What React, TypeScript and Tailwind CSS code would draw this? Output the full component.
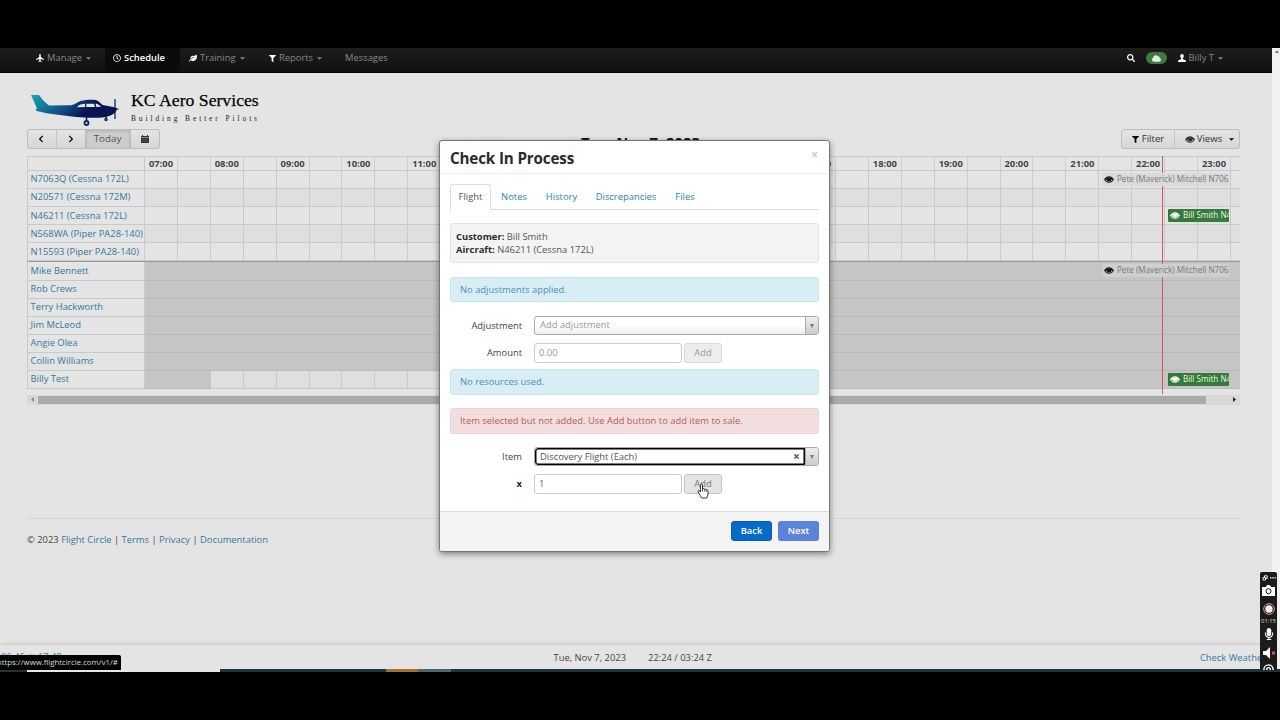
import type { ReactNode } from "react";
import {
  FaChevronLeft,
  FaChevronRight,
  FaCloud,
  FaFilter,
  FaLeaf,
  FaMicrophone,
  FaRegClock,
  FaSearch,
} from "react-icons/fa";

const aircraft = [
  "N7063Q (Cessna 172L)",
  "N20571 (Cessna 172M)",
  "N46211 (Cessna 172L)",
  "N568WA (Piper PA28-140)",
  "N15593 (Piper PA28-140)",
];
const people = [
  "Mike Bennett",
  "Rob Crews",
  "Terry Hackworth",
  "Jim McLeod",
  "Angie Olea",
  "Collin Williams",
  "Billy Test",
];
const slots = Array.from({ length: 33 }, (_, i) => i);

function Caret({ className = "" }: { className?: string }) {
  return (
    <svg viewBox="0 0 6 3" className={`h-[3px] w-[5px] shrink-0 ${className}`} fill="currentColor">
      <path d="M0 0h6L3 3z" />
    </svg>
  );
}

function Eye({ className = "" }: { className?: string }) {
  return (
    <svg viewBox="0 0 18 12" className={`h-[7px] w-[10px] shrink-0 ${className}`} fill="currentColor">
      <path
        fillRule="evenodd"
        d="M9 0C5 0 2 2.500 0 6c2 3.500 5 6 9 6s7-2.500 9-6c-2-3.500-5-6-9-6zM2.500 7c.5-1 .9-1.400 1.500-2 0 3 2.300 4.600 5 4.600s5-1.600 5-4.600c.6.600 1 1 1.500 2-1.500 2.300-3.900 3.600-6.500 3.600S4 9.300 2.500 7zM7 3.200c.6-.8 1.300-1.200 2.200-1.200l.1 1c-.7 0-1.100.3-1.500.8z"
      />
    </svg>
  );
}

function PlaneIcon() {
  return (
    <svg viewBox="0 0 16 16" className="mr-[3px] ml-px size-[8px] shrink-0 text-white" fill="currentColor">
      <path d="M8 0C7 0 6.400 1.300 6.400 2.800v3.400L0 10.300V12l6.400-1.800.3 3L4.500 15v1L8 15.200l3.500.8v-1l-2.200-1.800.3-3L16 12v-1.700L9.600 6.200V2.800C9.600 1.300 9 0 8 0z" />
    </svg>
  );
}

function UserIcon() {
  return (
    <svg viewBox="0 0 16 16" className="size-[8px] shrink-0 text-white" fill="currentColor">
      <path d="M8 0C5.800 0 4.500 1.600 4.500 4c0 1.800.7 3.600 1.800 4.600v1.600C5.500 11.600.5 12 0 14v2h16v-2c-.5-2-5.500-2.400-6.300-3.800V8.600C10.800 7.600 11.500 5.800 11.500 4 11.500 1.600 10.200 0 8 0z" />
    </svg>
  );
}

function CalendarIcon() {
  return (
    <svg viewBox="0 0 16 16" className="size-[8px]" fill="currentColor">
      <path d="M2 0h2v2h8V0h2v2h2v3H0V2h2zM0 6h16v10H0z" />
      <path d="M1 9h14M1 12.500h14" stroke="#777" strokeWidth=".8" />
    </svg>
  );
}

function PlaneLogo() {
  return (
    <svg viewBox="0 0 88 32" className="h-[32px] w-[88px] shrink-0">
      <defs>
        <linearGradient id="plane" x1="0" y1="0" x2="1" y2="0.300">
          <stop offset="0" stopColor="#12a9ae" />
          <stop offset=".5" stopColor="#124f86" />
          <stop offset=".8" stopColor="#071552" />
          <stop offset="1" stopColor="#071552" />
        </linearGradient>
      </defs>
      <path
        fill="url(#plane)"
        fillRule="evenodd"
        d="M0 0h8c3 4 6 8 10 10.500l22-.3c4-.4 6-3.200 10-4.400 4-.9 9-1.300 13-1 4 .2 6 3 8.500 5.200l9.500 1.700c3 .6 5 1.300 5 2.100-.5 2.500-2 4.500-5 6-3 1.500-6 2.300-10 2.700-7 .4-18 .2-26-.5L17 18.500 5.500 16 4.500 14.500l1.500-1zM46 12.200l8-.2V8.800c-3 .2-6 .8-8 3.400zm9.300-.2 8.700-.1-1-3.200c-3-.1-5 0-7.700.1zm10 -.1 5-.2-4-2.900H64.600z"
      />
      <path d="M84 4v20M82 14h5.500" stroke="#071552" strokeWidth="1.200" />
      <path d="M55.500 21v5M75 20v3.500" stroke="#071552" strokeWidth="1.500" />
      <circle cx="55.500" cy="28" r="2" fill="none" stroke="#0b235f" strokeWidth="1.800" />
      <circle cx="75" cy="24.500" r="1.100" fill="none" stroke="#0b235f" strokeWidth="1.400" />
    </svg>
  );
}

function NavBar() {
  const item = "flex items-center whitespace-nowrap";
  return (
    <nav className="flex h-[25px] shrink-0 items-stretch border-b border-black bg-linear-to-b from-[#1d1d1d] to-[#101010] pb-[4px] text-[#868686]">
      <div className={`${item} ml-[26px] w-[79px] pl-[9px]`}>
        <PlaneIcon />
        Manage
        <Caret className="ml-[4px]" />
      </div>
      <div className="-mb-[4px] flex w-[75px] items-center bg-[#0b0b0b] pb-[4px] pl-[8px] text-white">
        <FaRegClock className="mr-[3px] size-[8px]" />
        <span className="font-semibold">Schedule</span>
      </div>
      <div className={`${item} w-[80px] pl-[9px]`}>
        <FaLeaf className="mr-[3px] size-[8px] text-white" />
        Training
        <Caret className="ml-[4px]" />
      </div>
      <div className={`${item} w-[77px] pl-[9px]`}>
        <FaFilter className="mr-[3px] size-[7px] text-white" />
        Reports
        <Caret className="ml-[4px]" />
      </div>
      <div className={`${item} pl-[8px]`}>Messages</div>
      <div className="ml-auto flex items-center pr-[49px]">
        <FaSearch className="size-[8px] text-white" />
        <span className="ml-[11px] flex h-[12px] w-[21px] items-center justify-center rounded-full bg-[#3e7a3f] text-[#e5efe5]">
          <FaCloud className="size-[9px]" />
        </span>
        <span className="ml-[11px] flex items-center gap-[3px]">
          <UserIcon />
          Billy T
          <Caret className="ml-px" />
        </span>
      </div>
    </nav>
  );
}

function Toolbar() {
  const group =
    "flex h-[20px] items-stretch rounded-[3px] border border-[#bdbdbd] bg-linear-to-b from-[#e4e4e4] to-[#d6d6d6] text-[#333]";
  return (
    <div className="flex h-[20px] items-center justify-between">
      <div className={group}>
        <span className="flex w-[29px] items-center justify-center border-r border-[#c4c4c4] pr-[2px]">
          <FaChevronLeft className="size-[8px] text-black" />
        </span>
        <span className="flex w-[29px] items-center justify-center border-r border-[#bbb]">
          <FaChevronRight className="size-[8px] text-black" />
        </span>
        <span className="flex w-[45px] items-center justify-center border-r border-[#bbb] bg-[#cdcdcd] pr-px text-[9.800px] text-[#555] shadow-[inset_0_1px_3px_rgba(0,0,0,0.15)]">
          Today
        </span>
        <span className="flex w-[28px] items-center justify-center pr-px">
          <CalendarIcon />
        </span>
      </div>
      <h2 className="mt-[6px] text-[14.800px] font-bold text-[#111]">Tue, Nov 7, 2023</h2>
      <div className={`${group} text-[9.600px]`}>
        <span className="flex w-[53px] items-center justify-center gap-[3px] border-r border-[#c4c4c4]">
          <FaFilter className="size-[7px] text-black" />
          Filter
        </span>
        <span className="flex w-[64px] items-center justify-center gap-[2px] pl-[5px]">
          <Eye />
          Views
          <Caret className="ml-[5px] text-black" />
        </span>
      </div>
    </div>
  );
}

function Row({ label, shade }: { label: string; shade: (slot: number) => string }) {
  return (
    <div className="flex h-[18.100px] border-b border-[#c9c9c9]">
      <div className="flex w-[118px] shrink-0 items-center border-x border-[#c9c9c9] pb-px pl-[2.500px] whitespace-nowrap text-[#37779f]">
        {label}
      </div>
      {slots.map((s) => (
        <div key={s} className={`w-[32.910px] shrink-0 border-r ${shade(s)}`} />
      ))}
      <div className={`grow ${shade(33)}`} />
    </div>
  );
}

function EventTag({ className, children }: { className: string; children: ReactNode }) {
  return (
    <div
      className={`absolute flex h-[13px] items-center overflow-hidden rounded-[1px] pl-px text-[8.100px] whitespace-nowrap ${className}`}
    >
      {children}
    </div>
  );
}

function Schedule() {
  const pete = (
    <>
      <Eye className="mr-[3px] ml-px text-[#151515]" />
      Pete (Maverick) Mitchell N7063Q
    </>
  );
  const bill = (
    <>
      <Eye className="mr-[3px] ml-px text-white" />
      Bill Smith N46211
    </>
  );
  return (
    <div className="relative mt-[7px] h-[238.500px]">
      <div className="overflow-hidden border-t border-[#c9c9c9]">
        <div className="flex h-[14px] border-b border-[#c9c9c9] font-bold text-[#444]">
          <div className="w-[118px] shrink-0 border-x border-[#c9c9c9]" />
          {slots.map((s) => (
            <div
              key={s}
              className="flex w-[32.910px] shrink-0 items-center justify-center border-r border-[#cfcfcf]"
            >
              {s % 2 === 0 ? `${String(7 + s / 2).padStart(2, "0")}:00` : ""}
            </div>
          ))}
        </div>
        {aircraft.map((a, i) => (
          <Row
            key={a}
            label={a}
            shade={() => (i % 2 ? "border-[#c9c9c9] bg-[#dfdfdf]" : "border-[#c9c9c9]")}
          />
        ))}
        <div className="h-px bg-[#999]" />
        {people.map((p, i) => (
          <Row
            key={p}
            label={p}
            shade={(s) =>
              i === 6 && s > 1 && s < 20
                ? "border-[#c9c9c9] bg-[#dfdfdf]"
                : "border-[#c5c5c5] bg-[#c5c5c5] shadow-[0_1px_0_#b9b9b9]"
            }
          />
        ))}
      </div>
      <div className="absolute top-0 left-[1135px] h-[238px] w-px bg-[#cf5a57]" />
      <EventTag className="top-[17px] left-[1075px] w-[127px] bg-[#dadada] text-[#777]">{pete}</EventTag>
      <EventTag className="top-[53px] left-[1141px] w-[61px] bg-[#357a38] text-[#eef5ee]">{bill}</EventTag>
      <EventTag className="top-[108px] left-[1075px] w-[127px] bg-[#cfcfcf] text-[#777]">{pete}</EventTag>
      <EventTag className="top-[217px] left-[1141px] w-[61px] bg-[#357a38] text-[#eef5ee]">{bill}</EventTag>
    </div>
  );
}

function Page() {
  return (
    <main className="flex grow flex-col bg-[#e4e4e4] pr-[32px] pl-[27px]">
      <header className="flex h-[56px] shrink-0 pt-[22px] pl-[4px]">
        <PlaneLogo />
        <div className="ml-[12px] flex flex-col font-['Liberation_Serif',serif] whitespace-nowrap text-black">
          <div className="-mt-[5px] text-[17.700px] leading-[20px] [-webkit-text-stroke:0.250px_#111]">
            KC Aero Services
          </div>
          <div className="mt-[4px] text-[7.400px] leading-[10px] tracking-[2.930px] text-[#222]">
            Building Better Pilots
          </div>
        </div>
      </header>
      <Toolbar />
      <Schedule />
      <div className="flex h-[10px] shrink-0 items-center justify-between bg-[#d9d9d9] px-[4px]">
        <svg viewBox="0 0 3 5" className="h-[5px] w-[3px]" fill="#888">
          <path d="M3 0v5L0 2.500z" />
        </svg>
        <div className="mr-auto ml-[4px] h-[8px] w-[1168px] bg-[#aaa]" />
        <svg viewBox="0 0 3 5" className="h-[5px] w-[3px]" fill="#222">
          <path d="M0 0v5l3-2.500z" />
        </svg>
      </div>
      <footer className="mt-[113.500px] border-t border-[#d5d5d5] pt-[14px] leading-[14px] text-[#444] [&_a]:text-[#37779f]">
        © 2023 <a>Flight Circle</a> | <a>Terms</a> | <a>Privacy</a> | <a>Documentation</a>
      </footer>
    </main>
  );
}

function StatusBar() {
  return (
    <div className="flex h-[25px] shrink-0 items-center border-t border-[#cfcfcf] bg-[#e4e4e4] text-[#444] shadow-[0_-1px_3px_rgba(0,0,0,0.08)]">
      <span className="w-[553.500px] shrink-0 pl-px text-[#2f7ba6]">
        06:46 <span className="text-[#555]">☀</span> 17:48
      </span>
      <span className="pt-px">Tue, Nov 7, 2023</span>
      <span className="ml-[22px] pt-px">22:24 / 03:24 Z</span>
      <span className="mr-[6px] ml-auto pt-px text-[#2f7ba6]">Check Weather</span>
    </div>
  );
}

function Alert({ tone, className, children }: { tone: "info" | "error"; className: string; children: ReactNode }) {
  const colors =
    tone === "info"
      ? "border-[#c3e9ef] bg-[#d9edf5] text-[#5090b3]"
      : "border-[#eed3d7] bg-[#f2dede] text-[#b85c5a]";
  return (
    <div className={`flex items-center rounded-[3px] border pl-[9px] ${colors} ${className}`}>
      {children}
    </div>
  );
}

function SelectBox({ active, children }: { active?: boolean; children: ReactNode }) {
  return (
    <div className="flex h-[19px] w-[285px] overflow-hidden rounded-[3px] border border-[#aaa] bg-linear-to-b from-white from-50% to-[#eee]">
      <div
        className={`flex grow items-center justify-between ${
          active
            ? "rounded-l-[3px] border-[1.500px] border-black bg-white pr-[5px] pl-[4px] text-[#555] shadow-[inset_0_0_0_0.500px_#000]"
            : "pb-px pl-[5px] text-[#999]"
        }`}
      >
        {children}
      </div>
      <div className="flex w-[13px] items-center justify-center border-l border-[#aaa] bg-linear-to-b from-[#eee] to-[#ccc] text-[#777]">
        <svg viewBox="0 0 4 4" className="size-[4px]" fill="currentColor">
          <path d="M0 0h4L2 4z" />
        </svg>
      </div>
    </div>
  );
}

function Field({ label, className, children }: { label: ReactNode; className: string; children: ReactNode }) {
  return (
    <div className={`flex items-center ${className}`}>
      <label className="w-[72px] shrink-0 text-right text-[#444]">{label}</label>
      <div className="ml-[12px] flex gap-[2px]">{children}</div>
    </div>
  );
}

function TextBox({ children, muted }: { children: ReactNode; muted?: boolean }) {
  return (
    <div
      className={`flex h-[20px] w-[148px] items-center rounded-[3px] border border-[#ccc] bg-white pl-[4px] ${
        muted ? "text-[#999]" : "text-[#666]"
      }`}
    >
      {children}
    </div>
  );
}

function HandCursor() {
  return (
    <svg viewBox="0 0 24 32" className="absolute top-[8px] left-[12px] h-[16px] w-[12px]">
      <path
        d="M7 18V4c0-2.800 4-2.800 4 0v8c1-1.500 3.500-1 3.700.8 1-1.300 3.300-.7 3.500 1 1.500-.9 3.800 0 3.800 2.200v6c0 3-2 5-2.500 8H9c-.8-3.500-3.500-5.500-5-9l-2-4c-.8-2.200 1.800-3.300 3-1.500z"
        fill="#fff"
        stroke="#222"
        strokeWidth="1.800"
        strokeLinejoin="round"
      />
      <path d="M11 12v5M14.700 13v4M18.300 14v4" stroke="#222" strokeWidth="1.500" />
    </svg>
  );
}

function Modal() {
  return (
    <section className="absolute top-[140px] left-[439px] flex h-[412px] w-[391px] flex-col overflow-hidden rounded-[3px] border border-[#777] bg-white shadow-[0_2px_6px_rgba(0,0,0,0.45)]">
      <div className="flex h-[33px] shrink-0 justify-between border-b border-[#eee] pr-[10px] pl-[10px]">
        <h3 className="pt-px text-[15.200px] leading-[33px] font-bold tracking-[-0.150px] text-[#2b2b2b]">
          Check In Process
        </h3>
        <span className="pr-px text-[12px] leading-[28px] font-bold text-[#ccc]">×</span>
      </div>
      <div className="flex grow flex-col px-[10px] pt-[10px]">
        <div className="flex h-[26px] shrink-0 items-end border-b border-[#ddd] text-[#1d86ba]">
          <span className="-mb-px flex h-[26px] w-[41px] items-center justify-center rounded-t-[3px] border border-b-0 border-[#ddd] bg-white pb-px text-[#555]">
            Flight
          </span>
          <span className="flex h-[25px] w-[46px] items-center justify-center">Notes</span>
          <span className="flex h-[25px] w-[49px] items-center justify-center">History</span>
          <span className="flex h-[25px] w-[80px] items-center justify-center">Discrepancies</span>
          <span className="flex h-[25px] w-[38px] items-center justify-center">Files</span>
        </div>
        <div className="mt-[13px] flex h-[40px] shrink-0 flex-col justify-center rounded-[3px] border border-[#e3e3e3] bg-[#f3f3f3] pl-[5px] leading-[13.400px] text-[#555]">
          <div>
            <b className="text-[#2b2b2b]">Customer:</b> Bill Smith
          </div>
          <div>
            <b className="text-[#2b2b2b]">Aircraft:</b> N46211 (Cessna 172L)
          </div>
        </div>
        <Alert tone="info" className="mt-[14px] h-[25px] shrink-0">
          No adjustments applied.
        </Alert>
        <Field label="Adjustment" className="mt-[14px] h-[19px]">
          <SelectBox>Add adjustment</SelectBox>
        </Field>
        <Field label="Amount" className="mt-[8px] h-[20px]">
          <TextBox muted>0.00</TextBox>
          <span className="flex w-[38px] items-center justify-center rounded-[3px] border border-[#d9d9d9] bg-[#ededed] text-[#999]">
            Add
          </span>
        </Field>
        <Alert tone="info" className="mt-[6px] h-[26px] shrink-0">
          No resources used.
        </Alert>
        <Alert tone="error" className="mt-[13px] h-[26px] shrink-0">
          Item selected but not added. Use Add button to add item to sale.
        </Alert>
        <Field label="Item" className="mt-[13px] h-[19px]">
          <SelectBox active>
            Discovery Flight (Each)
            <svg viewBox="0 0 6 6" className="size-[5px]">
              <path d="M.5.5l5 5M5.500.5l-5 5" stroke="#555" strokeWidth="1.600" />
            </svg>
          </SelectBox>
        </Field>
        <Field label={<b className="text-[#222]">x</b>} className="mt-[8px] h-[20px]">
          <TextBox>1</TextBox>
          <span className="relative flex w-[38px] items-center justify-center rounded-[3px] border border-[#c4c4c4] bg-[#e4e4e4] text-[#777]">
            Add
            <HandCursor />
          </span>
        </Field>
      </div>
      <div className="flex h-[40px] shrink-0 items-center justify-end gap-[6px] border-t border-[#ddd] bg-[#f4f4f4] pr-[10px] pb-px font-semibold text-white">
        <span className="flex h-[20px] w-[41px] items-center justify-center rounded-[3px] border border-[#0a5cab] bg-[#056bc9]">
          Back
        </span>
        <span className="flex h-[20px] w-[41px] items-center justify-center rounded-[3px] bg-[#5a83d9]">Next</span>
      </div>
    </section>
  );
}

function RecorderRail() {
  return (
    <aside className="absolute top-[572px] left-[1260px] flex h-[98px] w-[17px] flex-col items-center overflow-hidden rounded-t-[2px] bg-[#1b1b1b] text-white">
      <div className="mt-[3px] flex h-[6px] w-full items-center justify-center gap-[2px]">
        <svg viewBox="0 0 6 6" className="size-[6px]" fill="none" stroke="#eee">
          <path d="M1 2.500h2.500V5H1zM2.500 2V.8h2.700v2.700H4" />
        </svg>
        <svg viewBox="0 0 6 2" className="h-[2px] w-[6px]" fill="#ddd">
          <path d="M0 0h1.400v1.400H0zM2.300 0h1.400v1.400H2.300zM4.600 0H6v1.400H4.600z" />
        </svg>
      </div>
      <svg viewBox="0 0 13 11" className="mt-[4px] h-[11px] w-[13px] shrink-0">
        <path d="M0 2h4l1-2h3l1 2h4v9H0z" fill="#fff" />
        <circle cx="6.500" cy="6.200" r="2.500" fill="#fff" stroke="#1b1b1b" />
      </svg>
      <svg viewBox="0 0 12 12" className="mt-[7px] size-[12px] shrink-0">
        <circle cx="6" cy="6" r="5.300" fill="none" stroke="#d9a596" />
        <circle cx="6" cy="6" r="3.700" fill="#fff0eb" />
      </svg>
      <span className="mt-[2px] text-[5.800px] leading-[8px] text-[#ddd]">01:15</span>
      <FaMicrophone className="mt-[3px] size-[12px] shrink-0" />
      <svg viewBox="0 0 14 12" className="mt-[7px] h-[12px] w-[14px] shrink-0">
        <path d="M1 4h3l4-4v12L4 8H1z" fill="#fff" />
        <path d="M10 4.500h3v3h-3z" fill="#e34b4b" />
      </svg>
      <svg viewBox="0 0 12 12" className="mt-[5px] size-[11px] shrink-0" fill="none" stroke="#fff" strokeWidth="1.500">
        <circle cx="6" cy="6" r="5" />
        <circle cx="6" cy="6" r="2" />
      </svg>
    </aside>
  );
}

export default function App() {
  return (
    <div className="relative flex h-[720px] w-[1280px] flex-col overflow-hidden bg-black font-['Open_Sans',sans-serif] text-[9.400px] leading-none">
      <div className="mt-[48px] flex h-[621px] shrink-0">
        <div className="flex w-[1272px] flex-col">
          <NavBar />
          <Page />
          <StatusBar />
        </div>
        <div className="flex w-[8px] justify-end bg-[#f1f1f1] pt-[2px] pr-[1px]">
          <svg viewBox="0 0 4 3" className="h-[3px] w-[4px]" fill="#777">
            <path d="M0 3h4L2 0z" />
          </svg>
        </div>
      </div>
      <div className="flex h-[3px] shrink-0 bg-[#1f333d]">
        <div className="ml-[27px] w-[193px] bg-[#e6e6e6]" />
        <div className="ml-[166px] w-[32px] bg-[#a86d35]" />
        <div className="w-[33px] bg-[#50656b]" />
      </div>
      <Modal />
      <div className="absolute top-[655px] left-0 flex h-[15px] w-[121px] items-center overflow-hidden rounded-tr-[2px] bg-black text-[7.800px] whitespace-nowrap text-[#ddd]">
        <span className="-ml-[3px]">https://www.flightcircle.com/v1/#</span>
      </div>
      <RecorderRail />
    </div>
  );
}
